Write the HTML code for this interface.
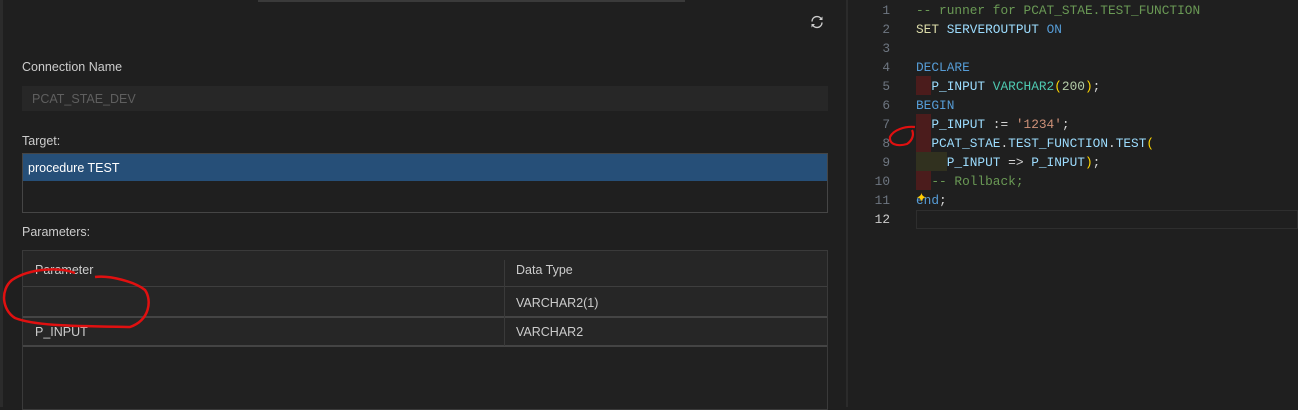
<!DOCTYPE html>
<html><head><meta charset="utf-8"><style>
*{margin:0;padding:0;box-sizing:border-box}
body{width:1298px;height:407px;background:#1f1f1f;overflow:hidden;position:relative;font-family:"Liberation Sans",sans-serif;color:#cccccc;font-size:12.5px}
.abs{position:absolute}
.lbl{position:absolute;left:22px;font-size:12.5px;color:#cccccc}
.code{position:absolute;left:916px;font-family:"Liberation Mono",monospace;font-size:12.8px;line-height:19px;white-space:pre;color:#9cdcfe}
.ln{position:absolute;left:850px;width:40px;text-align:right;font-family:"Liberation Mono",monospace;font-size:12.8px;line-height:19px;color:#6e7681}
.k{color:#569cd6}.c{color:#6a9955}.t{color:#4ec9b0}.p{color:#ffd700}.s{color:#ce9178}.w{color:#d4d4d4}.y{color:#dcdcaa}
</style></head><body>
<div class="abs" style="left:0;top:0;width:3px;height:407px;background:#2b2b2b"></div>
<div class="abs" style="left:258px;top:0;width:427px;height:2px;background:#3a3a3a"></div>
<div class="abs" style="left:846px;top:0;width:2px;height:407px;background:#2b2b2b"></div>
<svg class="abs" style="left:809px;top:14px" width="16" height="16" viewBox="0 0 16 16"><path d="M3 7.5A5 5 0 0 1 12.3 5" fill="none" stroke="#ccc" stroke-width="1.4"/><path d="M13 8.5A5 5 0 0 1 3.7 11" fill="none" stroke="#ccc" stroke-width="1.4"/><path d="M13.5 2.5v3.5h-3.5z" fill="#ccc"/><path d="M2.5 13.5v-3.5h3.5z" fill="#ccc"/></svg>
<div class="lbl" style="top:60px">Connection Name</div>
<div class="abs" style="left:22px;top:86px;width:806px;height:25px;background:#272727"></div>
<div class="abs" style="left:32px;top:92px;color:#5f5f5f">PCAT_STAE_DEV</div>
<div class="lbl" style="top:134px">Target:</div>
<div class="abs" style="left:22px;top:153px;width:806px;height:60px;border:1px solid #454545;background:#1f1f1f"></div>
<div class="abs" style="left:23px;top:154px;width:804px;height:27px;background:#264f78"></div>
<div class="abs" style="left:28px;top:161px;color:#fff">procedure TEST</div>
<div class="lbl" style="top:225px">Parameters:</div>
<div class="abs" style="left:22px;top:250px;width:806px;height:160px;border:1px solid #3a3a3a;background:#212121"></div>
<div class="abs" style="left:23px;top:251px;width:804px;height:95px;background:#262626"></div>
<div class="abs" style="left:23px;top:286px;width:804px;height:1px;background:#3e3e3e"></div>
<div class="abs" style="left:23px;top:316px;width:804px;height:2px;background:#444"></div>
<div class="abs" style="left:23px;top:345px;width:804px;height:2px;background:#444"></div>
<div class="abs" style="left:504px;top:260px;width:1px;height:86px;background:#3a3a3a"></div>
<div class="abs" style="left:35px;top:263px;color:#ccc">Parameter</div>
<div class="abs" style="left:516px;top:263px;color:#ccc">Data Type</div>
<div class="abs" style="left:516px;top:296px">VARCHAR2(1)</div>
<div class="abs" style="left:35px;top:325px">P_INPUT</div>
<div class="abs" style="left:516px;top:325px">VARCHAR2</div>
<svg class="abs" style="left:0;top:260px" width="160" height="70"><path d="M75 13C60 7 30 8 12 20 0 30 2 50 15 58 35 66 75 66 130 67 150 60 152 40 145 30 135 22 110 15 95 17" fill="none" stroke="#e01010" stroke-width="2.5"/></svg>
<div class="abs" style="left:916px;top:76px;width:15px;height:19px;background:#4b1c1c"></div>
<div class="abs" style="left:916px;top:114px;width:15px;height:38px;background:#4b1c1c"></div>
<div class="abs" style="left:916px;top:171px;width:15px;height:19px;background:#4b1c1c"></div>
<div class="abs" style="left:916px;top:152px;width:31px;height:19px;background:#31311f"></div>
<div class="abs" style="left:916px;top:210px;width:382px;height:19px;border:1px solid #2e2e2e"></div>
<svg class="abs" style="left:885px;top:122px" width="40" height="28"><path d="M30 5C20 4 8 8 5 15 4 22 12 25 22 22 28 18 29 12 27 8" fill="none" stroke="#e01010" stroke-width="2.2"/></svg>
<div class="ln" style="top:1px">1<br>2<br>3<br>4<br>5<br>6<br>7<br>8<br>9<br>10<br>11<br><span style="color:#ccc">12</span></div>
<div class="code" style="top:1px"><span class="c">-- runner for PCAT_STAE.TEST_FUNCTION</span>
<span class="y">SET</span> SERVEROUTPUT <span class="k">ON</span>

<span class="k">DECLARE</span>
  P_INPUT <span class="t">VARCHAR2</span><span class="p">(</span><span style="color:#b5cea8">200</span><span class="p">)</span><span class="w">;</span>
<span class="k">BEGIN</span>
  P_INPUT <span class="w">:=</span> <span class="s">'1234'</span><span class="w">;</span>
  PCAT_STAE<span class="w">.</span>TEST_FUNCTION<span class="w">.</span>TEST<span class="p">(</span>
    P_INPUT <span class="w">=&gt;</span> P_INPUT<span class="p">)</span><span class="w">;</span>
  <span class="c">-- Rollback;</span>
<span class="k">end</span><span class="w">;</span>
</div>
<div class="abs" style="left:916px;top:190px;color:#ffcc00;font-size:13px">✦</div>
</body></html>
